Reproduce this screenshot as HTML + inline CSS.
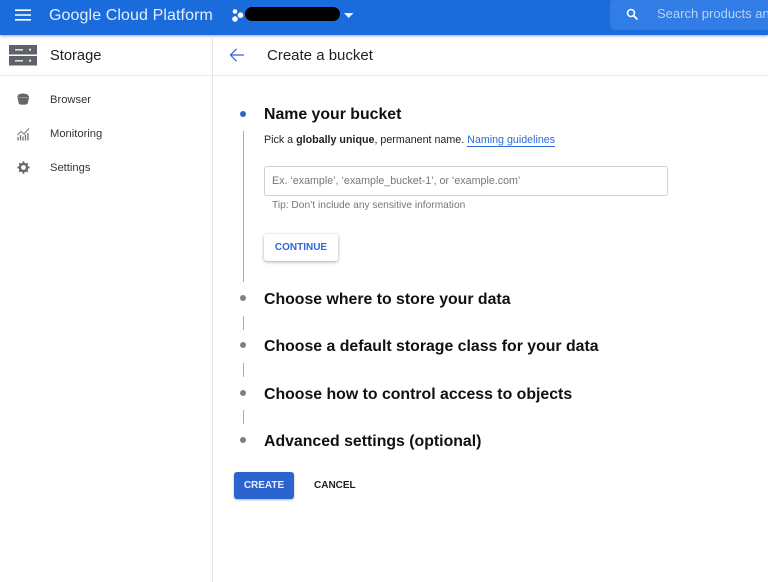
<!DOCTYPE html>
<html><head><meta charset="utf-8">
<style>
html,body{margin:0;padding:0;width:768px;height:582px;overflow:hidden;background:#fff;font-family:"Liberation Sans",sans-serif;}
#w{position:absolute;left:0;top:0;width:768px;height:582px;overflow:hidden;filter:blur(.35px);background:#fff;}
.a{position:absolute;white-space:nowrap;}
.h{font-size:15.85px;font-weight:bold;color:#111;left:264px;}
.dot{position:absolute;left:240px;width:6px;height:6px;border-radius:50%;background:#808080;}
.ln{position:absolute;left:242.6px;width:1.5px;background:#aeaeae;}
.nav{font-size:11.2px;color:#333;left:50px;}
</style></head><body><div id="w">
<div class="a" style="left:0;top:0;width:768px;height:35px;background:#1a6bdc;box-shadow:0 1px 3px rgba(0,0,0,.35)"></div>
<svg class="a" style="left:15px;top:9px" width="17" height="12"><path d="M0 1.2H16M0 6H16M0 10.8H16" stroke="#fff" stroke-width="1.6"/></svg>
<div class="a" style="left:49px;top:6px;font-size:16px;line-height:20px;color:#e6effc;letter-spacing:.1px">Google Cloud Platform</div>
<svg class="a" style="left:232px;top:8px" width="14" height="15"><circle cx="3" cy="3.5" r="2.3" fill="#fff"/><circle cx="3" cy="11" r="2.8" fill="#fff"/><circle cx="8.5" cy="7.2" r="2.8" fill="#fff"/></svg>
<div class="a" style="left:245px;top:7px;width:95px;height:14px;border-radius:7px;background:#000"></div>
<svg class="a" style="left:344px;top:13px" width="12" height="7"><path d="M0 0H9.5L4.7 5Z" fill="#e8f0fc"/></svg>
<div class="a" style="left:610px;top:-2px;width:170px;height:32px;border-radius:6px;background:#317ce5"></div>
<svg class="a" style="left:626px;top:8px" width="14" height="14"><circle cx="5" cy="5" r="3.5" fill="none" stroke="#fff" stroke-width="1.6"/><path d="M7.7 7.7L11.5 11.5" stroke="#fff" stroke-width="1.8"/></svg>
<div class="a" style="left:657px;top:6px;font-size:13px;line-height:16px;color:#b9d2f6">Search products an</div>

<div class="a" style="left:212px;top:36px;width:1px;height:546px;background:#e4e4e4"></div>
<div class="a" style="left:0;top:75px;width:768px;height:1px;background:#e8e8e8"></div>

<svg class="a" style="left:9px;top:45px" width="28" height="21"><rect width="28" height="9.5" fill="#5f6368"/><rect y="11" width="28" height="9.5" fill="#5f6368"/><rect x="6" y="4" width="8" height="1.6" fill="#ddd"/><rect x="6" y="15" width="8" height="1.6" fill="#ddd"/><circle cx="21" cy="4.7" r="1.2" fill="#ddd"/><circle cx="21" cy="15.7" r="1.2" fill="#ddd"/></svg>
<div class="a" style="left:50px;top:47px;font-size:14.7px;line-height:18px;color:#222">Storage</div>
<svg class="a" style="left:229px;top:47px" width="16" height="16"><path d="M15 8H1.5M7.5 1.8L1.5 8L7.5 14.2" fill="none" stroke="#2a69d0" stroke-width="1.2"/></svg>
<div class="a" style="left:267px;top:47px;font-size:15px;line-height:18px;color:#222">Create a bucket</div>

<svg class="a" style="left:17px;top:93px" width="13" height="13"><path d="M1.5 1.5Q6 -.5 10.5 1.5L12 3.5V5L10.5 11Q6 12.5 2 11L.5 5V3.5Z" fill="#666"/><path d="M1 4.5H11.5" stroke="#aaa" stroke-width=".7"/></svg>
<div class="a nav" style="top:93px;line-height:14px">Browser</div>
<svg class="a" style="left:17px;top:128px" width="13" height="13"><path d="M.5 7L4 3.5L7 6L12 .5" fill="none" stroke="#777" stroke-width="1"/><path d="M1 12.5V9M3.5 12.5V7M6 12.5V8.5M8.5 12.5V6.5M11 12.5V5" stroke="#777" stroke-width="1.3"/></svg>
<div class="a nav" style="top:127px;line-height:15px">Monitoring</div>
<svg class="a" style="left:17px;top:161px" width="13" height="13"><circle cx="6.5" cy="6.5" r="3.6" fill="none" stroke="#666" stroke-width="2.4"/><path d="M6.5 .3V12.7M.3 6.5H12.7M2.2 2.2L10.8 10.8M10.8 2.2L2.2 10.8" stroke="#666" stroke-width="1.7" stroke-dasharray="2.2 8 2.2 0"/></svg>
<div class="a nav" style="top:161px;line-height:14px">Settings</div>

<div class="dot" style="top:111px;background:#2b66d0"></div>
<div class="ln" style="top:131px;height:151px"></div>
<div class="a h" style="top:105px;line-height:20px">Name your bucket</div>
<div class="a" style="left:264px;top:133px;font-size:10.7px;line-height:14px;color:#222">Pick a <b>globally unique</b>, permanent name. <span style="color:#2b6bd8;border-bottom:1px solid #2b6bd8">Naming guidelines</span></div>
<div class="a" style="left:264px;top:166px;width:402px;height:28px;border:1px solid #d0d0d0;border-radius:3px"></div>
<div class="a" style="left:272px;top:174px;font-size:10.7px;line-height:14px;color:#777">Ex. ‘example’, ‘example_bucket-1’, or ‘example.com’</div>
<div class="a" style="left:272px;top:199px;font-size:10.2px;line-height:14px;color:#777">Tip: Don’t include any sensitive information</div>
<div class="a" style="left:264px;top:234px;width:74px;height:27px;border-radius:3px;background:#fff;box-shadow:0 1px 3px rgba(0,0,0,.35);text-align:center;font-size:10px;font-weight:bold;line-height:28px;color:#2b6bd8">CONTINUE</div>

<div class="dot" style="top:295px"></div>
<div class="a h" style="top:290px;line-height:20px">Choose where to store your data</div>
<div class="ln" style="top:316px;height:14px"></div>
<div class="dot" style="top:342px"></div>
<div class="a h" style="top:337px;line-height:20px">Choose a default storage class for your data</div>
<div class="ln" style="top:363px;height:14px"></div>
<div class="dot" style="top:390px"></div>
<div class="a h" style="top:385px;line-height:20px">Choose how to control access to objects</div>
<div class="ln" style="top:410px;height:14px"></div>
<div class="dot" style="top:437px"></div>
<div class="a h" style="top:432px;line-height:20px">Advanced settings (optional)</div>

<div class="a" style="left:234px;top:472px;width:60px;height:27px;border-radius:3px;background:#2b63cf;box-shadow:0 1px 2px rgba(0,0,0,.3);text-align:center;font-size:10px;font-weight:bold;line-height:27px;color:#e8effb">CREATE</div>
<div class="a" style="left:314px;top:478px;font-size:10px;font-weight:bold;line-height:15px;color:#222">CANCEL</div>
</div></body></html>
